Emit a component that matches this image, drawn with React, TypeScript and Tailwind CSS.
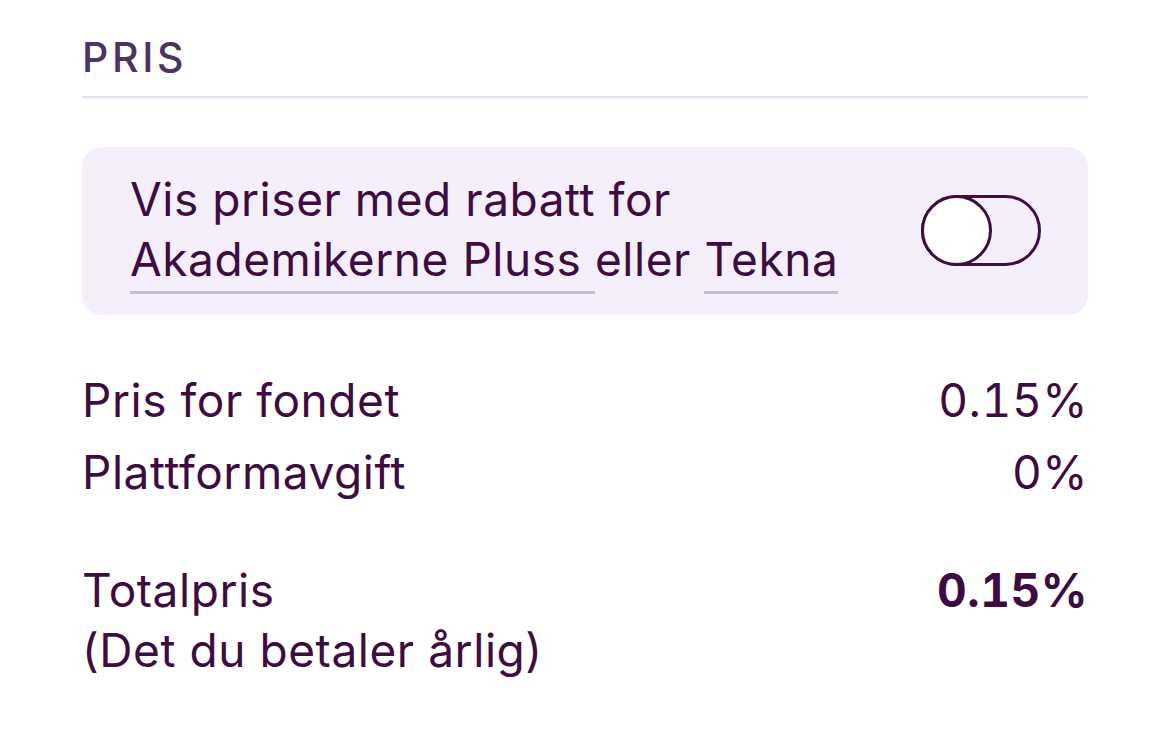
import { useState } from "react";

const rows = [
  { label: "Pris for fondet", value: "0.15%" },
  { label: "Plattformavgift", value: "0%" },
];

function Toggle({ on, onChange }: { on: boolean; onChange: () => void }) {
  return (
    <button
      type="button"
      role="switch"
      aria-checked={on}
      onClick={onChange}
      className="relative mt-[2px] h-[71px] w-[120px] shrink-0 rounded-full border-[3px] border-[#3d0e40] bg-transparent"
    >
      <span
        className={
          "absolute top-[-3px] h-[71px] w-[71px] rounded-full border-[3px] border-[#3d0e40] bg-white transition-all " +
          (on ? "left-[46px]" : "left-[-3px]")
        }
      />
    </button>
  );
}

export default function App() {
  const [discount, setDiscount] = useState(false);

  return (
    <div className="min-h-screen bg-white font-['Inter',sans-serif] text-[#3d0c40]">
      <div className="mx-[82px] pt-[33px]">
        <h2 className="text-[41px] font-medium leading-[48px] tracking-[0.09em] text-[#4a3461]">PRIS</h2>
        <div className="mt-[15px] h-[2px] bg-[#e4def0]" />

        {/* rabatt-boks */}
        <div className="mt-[49px] flex items-center justify-between rounded-[20px] bg-[#f5effc] pl-[48px] pr-[47px] pt-[22px] pb-[26px]">
          <p className="text-[46px] leading-[60px] tracking-[0.012em]">
            Vis priser med rabatt for
            <br />
            <span className="border-b-[3px] border-[#c7bfd1] pb-[4px]">Akademikerne Pluss </span>
            eller <span className="border-b-[3px] border-[#c7bfd1] pb-[4px]">Tekna</span>
          </p>
          <Toggle on={discount} onChange={() => setDiscount(!discount)} />
        </div>

        <div className="mt-[55px] flex flex-col gap-[12px] text-[46px] leading-[60px] tracking-[0.012em]">
          {rows.map((r) => (
            <div key={r.label} className="flex justify-between">
              <span>{r.label}</span>
              <span className="tabular-nums">{r.value}</span>
            </div>
          ))}
        </div>

        <div className="mt-[58px] flex justify-between text-[46px] leading-[60px] tracking-[0.012em]">
          <span>
            Totalpris
            <br />
            (Det du betaler årlig)
          </span>
          <span className="font-bold tabular-nums">0.15%</span>
        </div>
      </div>
    </div>
  );
}
